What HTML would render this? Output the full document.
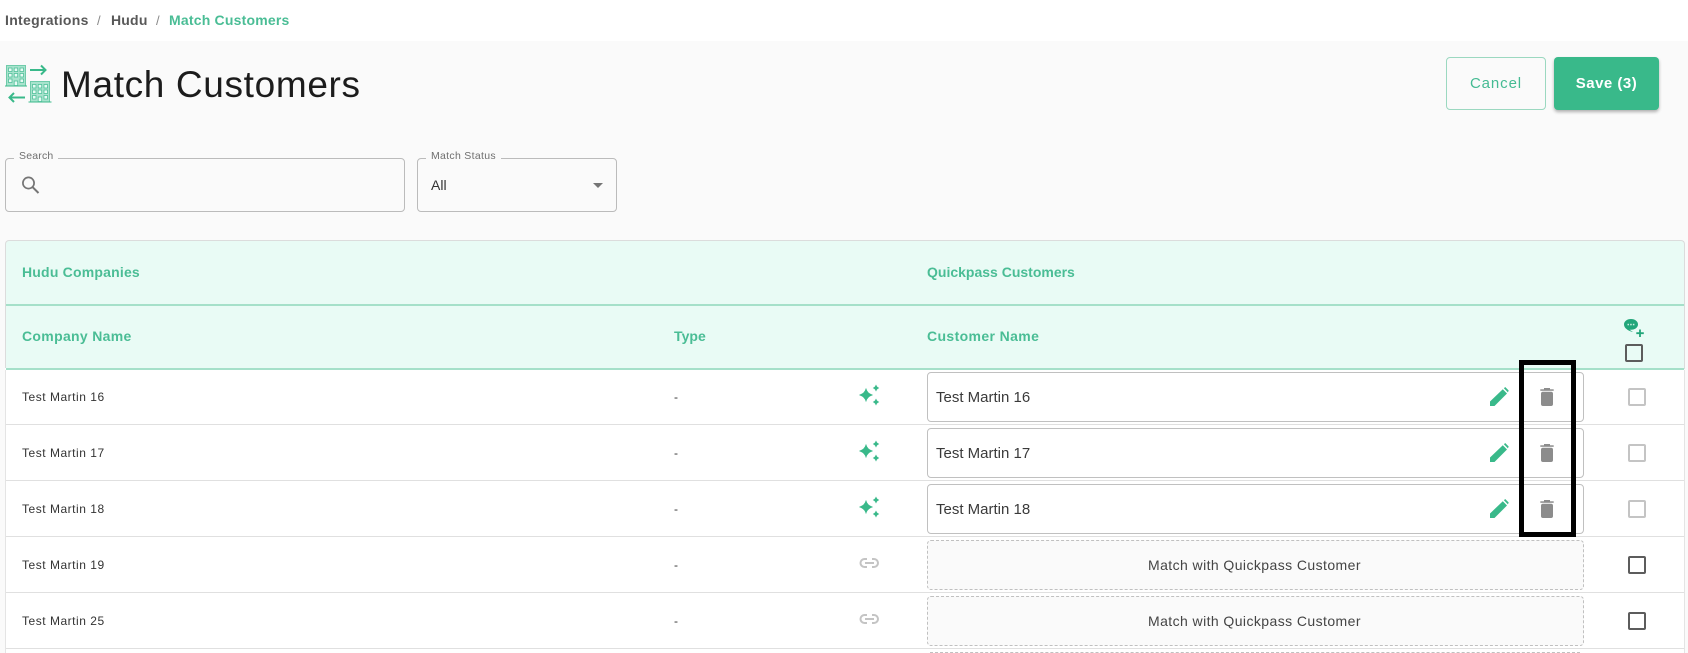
<!DOCTYPE html>
<html><head><meta charset="utf-8"><style>
html,body{margin:0;padding:0;width:1688px;height:653px;overflow:hidden;background:#fff;font-family:"Liberation Sans",sans-serif}
#w{position:relative;width:1688px;height:653px;overflow:hidden;background:#fff}
.a{position:absolute;white-space:nowrap}
.t{position:absolute;white-space:nowrap;line-height:20px}
.hd{font-size:14px;font-weight:700;color:#4abd95;letter-spacing:.05px}
.rn{font-size:12px;color:#333;letter-spacing:.52px}
.inp{position:absolute;left:927px;width:655px;height:48px;border:1px solid #c0c0c0;border-radius:4px;background:#fff}
.dash{position:absolute;left:927px;width:655px;height:48px;border:1px dashed #c0c0c0;border-radius:4px;background:#fafafa}
.cb{position:absolute;left:1628px;width:14px;height:14px;border:2px solid #c4c4c4;border-radius:2px}
.cbd{border-color:#5c5c5c}
.line{position:absolute;left:6px;width:1678px;height:1px;background:#e0e0e0}
</style></head><body><div id="w">
<div class="a" style="left:0;top:41px;width:1688px;height:612px;background:#fafafa"></div>

<div class="t" style="left:5px;top:10px;font-size:14px;font-weight:700;color:#4a4a4a;letter-spacing:.3px;opacity:.92">Integrations</div>
<div class="t" style="left:97px;top:11px;font-size:13px;color:#888">/</div>
<div class="t" style="left:111px;top:10px;font-size:14px;font-weight:700;color:#4a4a4a;letter-spacing:.2px;opacity:.92">Hudu</div>
<div class="t" style="left:156px;top:11px;font-size:13px;color:#888">/</div>
<div class="t" style="left:169px;top:10px;font-size:14px;font-weight:700;color:#4abd95;letter-spacing:.2px">Match Customers</div>

<svg class="a" style="left:0;top:60px" width="56" height="46" viewBox="0 60 56 46">
<g fill="#a8e3cd" stroke="#6fcbaa" stroke-width="1"><rect x="6.500" y="65.500" width="19" height="20.500"/><rect x="30.500" y="81.500" width="19" height="20.500"/></g>
<g fill="#39b98a"><rect x="5" y="85.500" width="22" height="1"/><rect x="28.500" y="101.500" width="23" height="1"/></g>
<g fill="#e9fbf5" stroke="#4fc09a" stroke-width=".8">
<rect x="8.500" y="68" width="3.500" height="3.500"/><rect x="14.200" y="68" width="3.500" height="3.500"/><rect x="20" y="68" width="3.500" height="3.500"/>
<rect x="8.500" y="73.500" width="3.500" height="3.500"/><rect x="14.200" y="73.500" width="3.500" height="3.500"/><rect x="20" y="73.500" width="3.500" height="3.500"/>
<rect x="8.500" y="79" width="3.500" height="3.500"/><rect x="20" y="79" width="3.500" height="3.500"/><rect x="14.200" y="81" width="3.500" height="4.500"/>
<rect x="32.500" y="84.500" width="3.500" height="3.500"/><rect x="38.200" y="84.500" width="3.500" height="3.500"/><rect x="44" y="84.500" width="3.500" height="3.500"/>
<rect x="32.500" y="90" width="3.500" height="3.500"/><rect x="38.200" y="90" width="3.500" height="3.500"/><rect x="44" y="90" width="3.500" height="3.500"/>
<rect x="32.500" y="95.500" width="3.500" height="3.500"/><rect x="44" y="95.500" width="3.500" height="3.500"/><rect x="38.200" y="97" width="3.500" height="4.500"/>
</g>
<g fill="none" stroke="#39b98a" stroke-width="2"><path d="M30 70H45M41 65.500L45.500 70L41 74.500"/><path d="M25 97.500H10M14 93L9.500 97.500L14 102"/></g>
</svg>

<div class="t" id="title" style="left:61px;top:63px;line-height:44px;font-size:37px;color:#1c1c1c;letter-spacing:.65px">Match Customers</div>

<div class="a" style="left:1446px;top:57px;width:98px;height:51px;border:1px solid #9bd8c0;border-radius:4px;background:#fafafa;text-align:center;line-height:51px;font-size:15px;color:#45bb93;letter-spacing:.9px">Cancel</div>
<div class="a" style="left:1554px;top:57px;width:105px;height:53px;border-radius:4px;background:#39b98a;box-shadow:0 2px 3px rgba(0,0,0,.3);text-align:center;line-height:53px;font-size:15px;font-weight:700;color:#fff;letter-spacing:.5px">Save (3)</div>

<div class="a" style="left:5px;top:158px;width:398px;height:52px;border:1px solid #bbb;border-radius:4px"></div>
<div class="t" style="left:14px;top:146px;padding:0 5px;background:#fafafa;font-size:10.500px;color:#6f6f6f;letter-spacing:.2px">Search</div>
<svg class="a" style="left:18px;top:172px" width="24" height="24" viewBox="18 172 24 24"><circle cx="28.500" cy="183" r="5.600" fill="none" stroke="#757575" stroke-width="1.700"/><path d="M32.800 187.300L38.500 193" stroke="#757575" stroke-width="2" fill="none"/></svg>

<div class="a" style="left:417px;top:158px;width:198px;height:52px;border:1px solid #bbb;border-radius:4px"></div>
<div class="t" style="left:426px;top:146px;padding:0 5px;background:#fafafa;font-size:10.500px;color:#6f6f6f;letter-spacing:.3px">Match Status</div>
<div class="t" style="left:431px;top:175px;font-size:14px;color:#333">All</div>
<svg class="a" style="left:593px;top:183px" width="10" height="5"><path d="M0 0H10L5 5Z" fill="#757575"/></svg>

<div class="a" style="left:5px;top:240px;width:1678px;height:128px;background:#e9fbf5;border:1px solid #dcdcdc;border-bottom:0;border-radius:4px 4px 0 0"></div>
<div class="a" style="left:6px;top:304px;width:1678px;height:2px;background:#a5e0c9"></div>
<div class="a" style="left:5px;top:368px;width:1679px;height:285px;background:#fff"></div>
<div class="a" style="left:6px;top:368px;width:1678px;height:2px;background:#a5e0c9"></div>
<div class="a" style="left:5px;top:370px;width:1px;height:283px;background:#e4e4e4"></div>
<div class="a" style="left:1684px;top:370px;width:1px;height:283px;background:#e4e4e4"></div>

<div class="t hd" style="left:22px;top:262px;letter-spacing:.2px">Hudu Companies</div>
<div class="t hd" style="left:927px;top:262px;letter-spacing:0">Quickpass Customers</div>
<div class="t hd" style="left:22px;top:326px;letter-spacing:.32px">Company Name</div>
<div class="t hd" style="left:674px;top:326px">Type</div>
<div class="t hd" style="left:927px;top:326px;letter-spacing:.38px">Customer Name</div>

<svg class="a" style="left:1620px;top:315px" width="28" height="26" viewBox="0 0 28 26">
<path fill="#22a67a" d="M11 4c4 0 7 2.400 7 5.400 0 3-3 5.400-7 5.400-.6 0-1 0-1.500-.1L13 17c-3-.6-5-1.600-6.500-3C5 13 4 11.300 4 9.400 4 6.400 7 4 11 4z"/>
<g fill="#cfeee2"><rect x="7.500" y="8.800" width="1.500" height="1.500"/><rect x="10.200" y="8.800" width="1.500" height="1.500"/><rect x="12.900" y="8.800" width="1.500" height="1.500"/></g>
<path stroke="#22a67a" stroke-width="1.800" fill="none" d="M20 14.500V22M16.300 18.200H23.800"/>
</svg>
<div class="cb cbd" style="left:1625px;top:344px"></div>

<div class="line" style="top:424px"></div>
<div class="line" style="top:480px"></div>
<div class="line" style="top:536px"></div>
<div class="line" style="top:592px"></div>
<div class="line" style="top:648px"></div>

<div class="t rn" style="left:22px;top:387px">Test Martin 16</div>
<div class="t rn" style="left:22px;top:443px">Test Martin 17</div>
<div class="t rn" style="left:22px;top:499px">Test Martin 18</div>
<div class="t rn" style="left:22px;top:555px">Test Martin 19</div>
<div class="t rn" style="left:22px;top:611px">Test Martin 25</div>
<div class="t rn" style="left:674px;top:387px">-</div>
<div class="t rn" style="left:674px;top:443px">-</div>
<div class="t rn" style="left:674px;top:499px">-</div>
<div class="t rn" style="left:674px;top:555px">-</div>
<div class="t rn" style="left:674px;top:611px">-</div>

<svg class="a" style="left:0;top:360px" width="1688" height="293" viewBox="0 360 1688 293">
<defs>
<g id="sp" fill="#39b98a" stroke="#39b98a" stroke-width=".6" stroke-linejoin="round"><path d="M0 -6.500Q1 -1.800 6.500 0Q1 1.800 0 6.500Q-1 1.800 -6.500 0Q-1 -1.800 0 -6.500Z"/><path d="M10 -10Q10.500 -7.800 12.800 -7Q10.500 -6.200 10 -4Q9.500 -6.200 7.200 -7Q9.500 -7.800 10 -10Z"/><path d="M10 4Q10.500 6.200 12.800 7Q10.500 7.800 10 10Q9.500 7.800 7.200 7Q9.500 6.200 10 4Z"/></g>
<g id="lk" fill="none" stroke="#c4c4c4" stroke-width="2"><path d="M867 559H864.500a4 4 0 0 0 0 8H867"/><path d="M872 559h2a4 4 0 0 1 0 8h-2"/><path d="M865 563h9"/></g>
</defs>
<use href="#sp" x="866" y="395"/><use href="#sp" x="866" y="451"/><use href="#sp" x="866" y="507"/>
<use href="#lk" x="0" y="0"/><use href="#lk" x="0" y="56"/>
</svg>

<div class="inp" style="top:372px"></div><div class="inp" style="top:428px"></div><div class="inp" style="top:484px"></div>
<div class="dash" style="top:540px"></div><div class="dash" style="top:596px"></div>
<div class="a" style="left:930px;top:652px;width:650px;height:0;border-top:1px dashed #c0c0c0"></div>

<div class="t" style="left:936px;top:388px;font-size:15px;color:#3a3a3a;letter-spacing:0">Test Martin 16</div>
<div class="t" style="left:936px;top:444px;font-size:15px;color:#3a3a3a;letter-spacing:0">Test Martin 17</div>
<div class="t" style="left:936px;top:500px;font-size:15px;color:#3a3a3a;letter-spacing:0">Test Martin 18</div>
<div class="t" style="left:1148px;top:555px;font-size:14px;color:#444;letter-spacing:.42px">Match with Quickpass Customer</div>
<div class="t" style="left:1148px;top:611px;font-size:14px;color:#444;letter-spacing:.42px">Match with Quickpass Customer</div>

<svg class="a" style="left:0;top:360px" width="1688" height="293" viewBox="0 360 1688 293">
<defs>
<g id="pn" fill="#39b98a"><path d="M1490 406V401.500L1502.800 389.200L1507 393.500L1494.500 406Z"/><path d="M1503.900 388.300L1505.200 387L1508.700 390.500L1507.900 392.400Z"/></g>
<g id="tr" fill="#8c8c8c"><rect x="1544" y="388" width="6" height="1.500"/><rect x="1540.300" y="389.300" width="13.400" height="1.500"/><rect x="1541" y="391.700" width="12" height="14.300" rx="2"/></g>
</defs>
<use href="#pn" y="0"/><use href="#pn" y="56"/><use href="#pn" y="112"/>
<use href="#tr" y="0"/><use href="#tr" y="56"/><use href="#tr" y="112"/>
</svg>

<div class="cb" style="top:388px"></div><div class="cb" style="top:444px"></div><div class="cb" style="top:500px"></div>
<div class="cb cbd" style="top:556px"></div><div class="cb cbd" style="top:612px"></div>

<div class="a" style="left:1519px;top:360px;width:47px;height:167px;border:5px solid #000"></div>
</div></body></html>
